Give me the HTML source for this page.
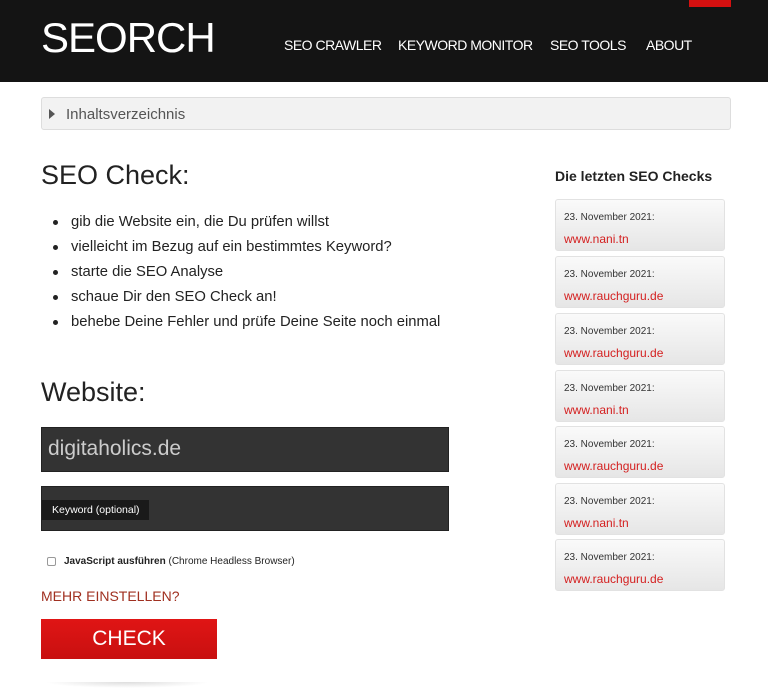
<!DOCTYPE html>
<html><head><meta charset="utf-8"><style>
*{margin:0;padding:0;box-sizing:border-box}
body{width:768px;height:686px;overflow:hidden;background:#fff;font-family:"Liberation Sans",sans-serif;color:#222;position:relative}
.hdr{position:absolute;left:0;top:0;width:768px;height:82px;background:#141414}
.logo{position:absolute;left:41px;top:14px;color:#fff;font-size:42px;letter-spacing:-1px;font-weight:400}
.nav{position:absolute;top:37px;color:#fff;font-size:14px;letter-spacing:-0.5px}
.tab{position:absolute;left:689px;top:0;width:42px;height:7px;background:#d51010}
.toc{position:absolute;left:41px;top:97px;width:690px;height:33px;border:1px solid #ddd;border-radius:3px;background:#f2f2f2}
.toc span{position:absolute;left:24px;top:8px;font-size:15px;color:#555}
.tri{position:absolute;left:7px;top:11px;width:0;height:0;border-left:6px solid #555;border-top:5px solid transparent;border-bottom:5px solid transparent}
h1{position:absolute;left:41px;top:160px;font-size:27px;font-weight:400;color:#222}
ul{position:absolute;left:71px;top:210px;font-size:14.8px;line-height:25px;list-style:none}
ul li{position:relative}
ul li:before{content:"";position:absolute;left:-18px;top:10px;width:5px;height:5px;border-radius:50%;background:#222}
h2{position:absolute;left:41px;top:377px;font-size:27px;font-weight:400}
.in{position:absolute;left:41px;width:408px;height:45px;background:#333;border:1px solid #222}
.in1{top:427px;color:#ccc;font-size:21px;padding:9px 0 0 6px}
.kw{position:absolute;left:0;top:13px;background:#1a1a1a;color:#fff;font-size:10.5px;padding:4px 9px 4px 10px}
.cb{position:absolute;left:47px;top:557px;width:9px;height:9px;border:1px solid #999;border-radius:2px}
.js{position:absolute;left:64px;top:556px;font-size:10px;color:#222}
.more{position:absolute;left:41px;top:588px;font-size:14px;color:#a03020}
.btn{position:absolute;left:41px;top:619px;width:176px;height:40px;background:linear-gradient(#e01515,#c81010);color:#fff;font-size:21px;text-align:center;line-height:40px}
.shadow{position:absolute;left:45px;top:682px;width:165px;height:6px;background:radial-gradient(ellipse at center top,#ddd,#fff 70%)}
.side{position:absolute;left:555px;top:168px;font-size:14px;font-weight:700;color:#222}
.card{position:absolute;left:555px;width:170px;height:52px;border:1px solid #e2e2e2;border-radius:3px;background:linear-gradient(#fafafa,#e6e6e6)}
.card .d{position:absolute;left:8px;top:12px;font-size:10px;color:#333}
.card .u{position:absolute;left:8px;top:32px;font-size:12px;color:#d42020}
</style></head><body>
<div class="hdr"><div class="logo">SEORCH</div>
<div class="nav" style="left:284px">SEO CRAWLER</div>
<div class="nav" style="left:398px">KEYWORD MONITOR</div>
<div class="nav" style="left:550px">SEO TOOLS</div>
<div class="nav" style="left:646px">ABOUT</div>
<div class="tab"></div></div>
<div class="toc"><div class="tri"></div><span>Inhaltsverzeichnis</span></div>
<h1>SEO Check:</h1>
<ul><li>gib die Website ein, die Du prüfen willst</li><li>vielleicht im Bezug auf ein bestimmtes Keyword?</li><li>starte die SEO Analyse</li><li>schaue Dir den SEO Check an!</li><li>behebe Deine Fehler und prüfe Deine Seite noch einmal</li></ul>
<h2>Website:</h2>
<div class="in in1">digitaholics.de</div>
<div class="in" style="top:486px"><div class="kw">Keyword (optional)</div></div>
<div class="cb"></div>
<div class="js"><b>JavaScript ausführen</b> (Chrome Headless Browser)</div>
<div class="more">MEHR EINSTELLEN?</div>
<div class="btn">CHECK</div>
<div class="shadow"></div>
<div class="side">Die letzten SEO Checks</div>
<div class="card" style="top:199px"><div class="d">23. November 2021:</div><div class="u">www.nani.tn</div></div>
<div class="card" style="top:256px"><div class="d">23. November 2021:</div><div class="u">www.rauchguru.de</div></div>
<div class="card" style="top:313px"><div class="d">23. November 2021:</div><div class="u">www.rauchguru.de</div></div>
<div class="card" style="top:370px"><div class="d">23. November 2021:</div><div class="u">www.nani.tn</div></div>
<div class="card" style="top:426px"><div class="d">23. November 2021:</div><div class="u">www.rauchguru.de</div></div>
<div class="card" style="top:483px"><div class="d">23. November 2021:</div><div class="u">www.nani.tn</div></div>
<div class="card" style="top:539px"><div class="d">23. November 2021:</div><div class="u">www.rauchguru.de</div></div>
</body></html>
